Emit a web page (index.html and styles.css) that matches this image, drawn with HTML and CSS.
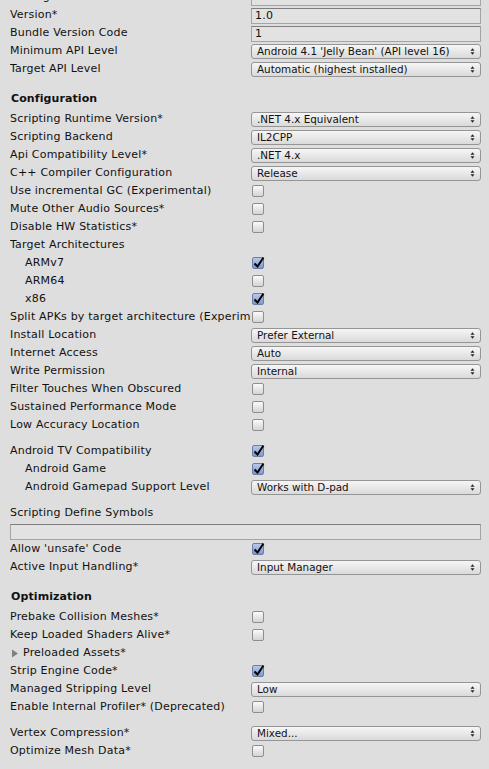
FILE: index.html
```html
<!DOCTYPE html>
<html>
<head>
<meta charset="utf-8">
<link rel="stylesheet" href="styles.css">
</head>
<body>
<div class="panel">
  <div class="row first"><div class="label">Package Name</div><div class="field"><div class="text"></div></div></div>
  <div class="row"><div class="label">Version*</div><div class="field"><div class="text">1.0</div></div></div>
  <div class="row"><div class="label">Bundle Version Code</div><div class="field"><div class="text">1</div></div></div>
  <div class="row"><div class="label">Minimum API Level</div><div class="field"><div class="popup"><span>Android 4.1 'Jelly Bean' (API level 16)</span><svg class="arr" width="5" height="7" viewBox="0 0 5 7"><polygon points="0.5,2.8 2.5,0.3 4.5,2.8"/><polygon points="0.5,4.2 2.5,6.7 4.5,4.2"/></svg></div></div></div>
  <div class="row"><div class="label">Target API Level</div><div class="field"><div class="popup"><span>Automatic (highest installed)</span><svg class="arr" width="5" height="7" viewBox="0 0 5 7"><polygon points="0.5,2.8 2.5,0.3 4.5,2.8"/><polygon points="0.5,4.2 2.5,6.7 4.5,4.2"/></svg></div></div></div>

  <div class="header">Configuration</div>
  <div class="row"><div class="label">Scripting Runtime Version*</div><div class="field"><div class="popup"><span>.NET 4.x Equivalent</span><svg class="arr" width="5" height="7" viewBox="0 0 5 7"><polygon points="0.5,2.8 2.5,0.3 4.5,2.8"/><polygon points="0.5,4.2 2.5,6.7 4.5,4.2"/></svg></div></div></div>
  <div class="row"><div class="label">Scripting Backend</div><div class="field"><div class="popup"><span>IL2CPP</span><svg class="arr" width="5" height="7" viewBox="0 0 5 7"><polygon points="0.5,2.8 2.5,0.3 4.5,2.8"/><polygon points="0.5,4.2 2.5,6.7 4.5,4.2"/></svg></div></div></div>
  <div class="row"><div class="label">Api Compatibility Level*</div><div class="field"><div class="popup"><span>.NET 4.x</span><svg class="arr" width="5" height="7" viewBox="0 0 5 7"><polygon points="0.5,2.8 2.5,0.3 4.5,2.8"/><polygon points="0.5,4.2 2.5,6.7 4.5,4.2"/></svg></div></div></div>
  <div class="row"><div class="label">C++ Compiler Configuration</div><div class="field"><div class="popup"><span>Release</span><svg class="arr" width="5" height="7" viewBox="0 0 5 7"><polygon points="0.5,2.8 2.5,0.3 4.5,2.8"/><polygon points="0.5,4.2 2.5,6.7 4.5,4.2"/></svg></div></div></div>
  <div class="row"><div class="label">Use incremental GC (Experimental)</div><div class="field"><div class="check"></div></div></div>
  <div class="row"><div class="label">Mute Other Audio Sources*</div><div class="field"><div class="check"></div></div></div>
  <div class="row"><div class="label">Disable HW Statistics*</div><div class="field"><div class="check"></div></div></div>
  <div class="row"><div class="label">Target Architectures</div><div class="field"></div></div>
  <div class="row"><div class="label indent">ARMv7</div><div class="field"><div class="check on"><svg class="tick" width="14" height="14" viewBox="0 0 14 14"><path d="M2.5 7.5 L5.5 10.5 L11.5 1.5"/></svg></div></div></div>
  <div class="row"><div class="label indent">ARM64</div><div class="field"><div class="check"></div></div></div>
  <div class="row"><div class="label indent">x86</div><div class="field"><div class="check on"><svg class="tick" width="14" height="14" viewBox="0 0 14 14"><path d="M2.5 7.5 L5.5 10.5 L11.5 1.5"/></svg></div></div></div>
  <div class="row"><div class="label">Split APKs by target architecture (Experimental)</div><div class="field"><div class="check"></div></div></div>
  <div class="row"><div class="label">Install Location</div><div class="field"><div class="popup"><span>Prefer External</span><svg class="arr" width="5" height="7" viewBox="0 0 5 7"><polygon points="0.5,2.8 2.5,0.3 4.5,2.8"/><polygon points="0.5,4.2 2.5,6.7 4.5,4.2"/></svg></div></div></div>
  <div class="row"><div class="label">Internet Access</div><div class="field"><div class="popup"><span>Auto</span><svg class="arr" width="5" height="7" viewBox="0 0 5 7"><polygon points="0.5,2.8 2.5,0.3 4.5,2.8"/><polygon points="0.5,4.2 2.5,6.7 4.5,4.2"/></svg></div></div></div>
  <div class="row"><div class="label">Write Permission</div><div class="field"><div class="popup"><span>Internal</span><svg class="arr" width="5" height="7" viewBox="0 0 5 7"><polygon points="0.5,2.8 2.5,0.3 4.5,2.8"/><polygon points="0.5,4.2 2.5,6.7 4.5,4.2"/></svg></div></div></div>
  <div class="row"><div class="label">Filter Touches When Obscured</div><div class="field"><div class="check"></div></div></div>
  <div class="row"><div class="label">Sustained Performance Mode</div><div class="field"><div class="check"></div></div></div>
  <div class="row"><div class="label">Low Accuracy Location</div><div class="field"><div class="check"></div></div></div>

  <div class="gap"></div>
  <div class="row"><div class="label">Android TV Compatibility</div><div class="field"><div class="check on"><svg class="tick" width="14" height="14" viewBox="0 0 14 14"><path d="M2.5 7.5 L5.5 10.5 L11.5 1.5"/></svg></div></div></div>
  <div class="row"><div class="label indent">Android Game</div><div class="field"><div class="check on"><svg class="tick" width="14" height="14" viewBox="0 0 14 14"><path d="M2.5 7.5 L5.5 10.5 L11.5 1.5"/></svg></div></div></div>
  <div class="row"><div class="label indent">Android Gamepad Support Level</div><div class="field"><div class="popup"><span>Works with D-pad</span><svg class="arr" width="5" height="7" viewBox="0 0 5 7"><polygon points="0.5,2.8 2.5,0.3 4.5,2.8"/><polygon points="0.5,4.2 2.5,6.7 4.5,4.2"/></svg></div></div></div>

  <div class="gap"></div>
  <div class="row"><div class="label">Scripting Define Symbols</div></div>
  <div class="row"><div class="text wide"></div></div>
  <div class="row"><div class="label">Allow 'unsafe' Code</div><div class="field"><div class="check on"><svg class="tick" width="14" height="14" viewBox="0 0 14 14"><path d="M2.5 7.5 L5.5 10.5 L11.5 1.5"/></svg></div></div></div>
  <div class="row"><div class="label">Active Input Handling*</div><div class="field"><div class="popup"><span>Input Manager</span><svg class="arr" width="5" height="7" viewBox="0 0 5 7"><polygon points="0.5,2.8 2.5,0.3 4.5,2.8"/><polygon points="0.5,4.2 2.5,6.7 4.5,4.2"/></svg></div></div></div>

  <div class="header">Optimization</div>
  <div class="row"><div class="label">Prebake Collision Meshes*</div><div class="field"><div class="check"></div></div></div>
  <div class="row"><div class="label">Keep Loaded Shaders Alive*</div><div class="field"><div class="check"></div></div></div>
  <div class="row"><div class="label fold"><svg class="tri" width="8" height="9" viewBox="0 0 8 9"><polygon points="1,0.5 7,4.5 1,8.5"/></svg>Preloaded Assets*</div></div>
  <div class="row"><div class="label">Strip Engine Code*</div><div class="field"><div class="check on"><svg class="tick" width="14" height="14" viewBox="0 0 14 14"><path d="M2.5 7.5 L5.5 10.5 L11.5 1.5"/></svg></div></div></div>
  <div class="row"><div class="label">Managed Stripping Level</div><div class="field"><div class="popup"><span>Low</span><svg class="arr" width="5" height="7" viewBox="0 0 5 7"><polygon points="0.5,2.8 2.5,0.3 4.5,2.8"/><polygon points="0.5,4.2 2.5,6.7 4.5,4.2"/></svg></div></div></div>
  <div class="row"><div class="label">Enable Internal Profiler* (Deprecated)</div><div class="field"><div class="check"></div></div></div>

  <div class="gap"></div>
  <div class="row"><div class="label">Vertex Compression*</div><div class="field"><div class="popup"><span>Mixed...</span><svg class="arr" width="5" height="7" viewBox="0 0 5 7"><polygon points="0.5,2.8 2.5,0.3 4.5,2.8"/><polygon points="0.5,4.2 2.5,6.7 4.5,4.2"/></svg></div></div></div>
  <div class="row"><div class="label">Optimize Mesh Data*</div><div class="field"><div class="check"></div></div></div>
</div>
</body>
</html>
```

FILE: styles.css
```css
html, body {
  margin: 0;
  padding: 0;
  background: #dedede;
  overflow: hidden;
}
body {
  width: 489px;
  height: 769px;
  font-family: "DejaVu Sans", Verdana, sans-serif;
  font-size: 11px;
  letter-spacing: 0.2px;
  color: #111;
}
.panel {
  display: flex;
  flex-direction: column;
  padding: 0 8px 0 10px;
  margin-top: -12px;
}
.row {
  display: flex;
  align-items: center;
  height: 18px;
  flex: none;
}
.label {
  width: 241px;
  flex: none;
  white-space: nowrap;
  overflow: hidden;
  line-height: 18px;
  height: 18px;
}
.label.indent {
  padding-left: 15px;
  box-sizing: border-box;
}
.label.fold {
  display: flex;
  align-items: center;
  gap: 4px;
  padding-left: 1px;
  box-sizing: border-box;
}
.tri polygon { fill: #808080; }
.field {
  flex: 1;
  display: flex;
  align-items: center;
  height: 18px;
}
.header {
  font-weight: bold;
  letter-spacing: 0.1px;
  height: 18px;
  line-height: 18px;
  margin: 12px 0 2px 1px;
  flex: none;
}
.gap {
  height: 8px;
  flex: none;
}
.text {
  flex: 1;
  height: 16px;
  box-sizing: border-box;
  border: 1px solid #a4a4a4;
  border-top-color: #7e7e7e;
  background: #e2e2e2;
  padding-left: 3px;
  line-height: 14px;
  margin-top: 1px;
}
.text.wide {
  flex: 1;
}
.popup {
  flex: 1;
  height: 15px;
  box-sizing: border-box;
  border: 1px solid #959595;
  border-radius: 3px;
  background: linear-gradient(#f6f6f6, #dadada);
  display: flex;
  align-items: center;
  justify-content: space-between;
  padding: 0 5px 0 5px;
  font-size: 10.4px;
  letter-spacing: 0;
  line-height: 13px;
  white-space: nowrap;
}
.arr polygon { fill: #222; }
.check {
  position: relative;
  width: 12px;
  height: 12px;
  box-sizing: border-box;
  border: 1px solid #8e8e8e;
  border-radius: 2px;
  background: linear-gradient(#fafafa, #d4d4d4);
  margin-left: 1px;
}
.check.on {
  background: linear-gradient(#b7c9ea, #7b98cf);
  border-color: #6a7ea6;
}
.tick {
  position: absolute;
  left: -1px;
  top: -2px;
}
.tick path {
  fill: none;
  stroke: #000;
  stroke-width: 2;
  stroke-linejoin: miter;
}
```
